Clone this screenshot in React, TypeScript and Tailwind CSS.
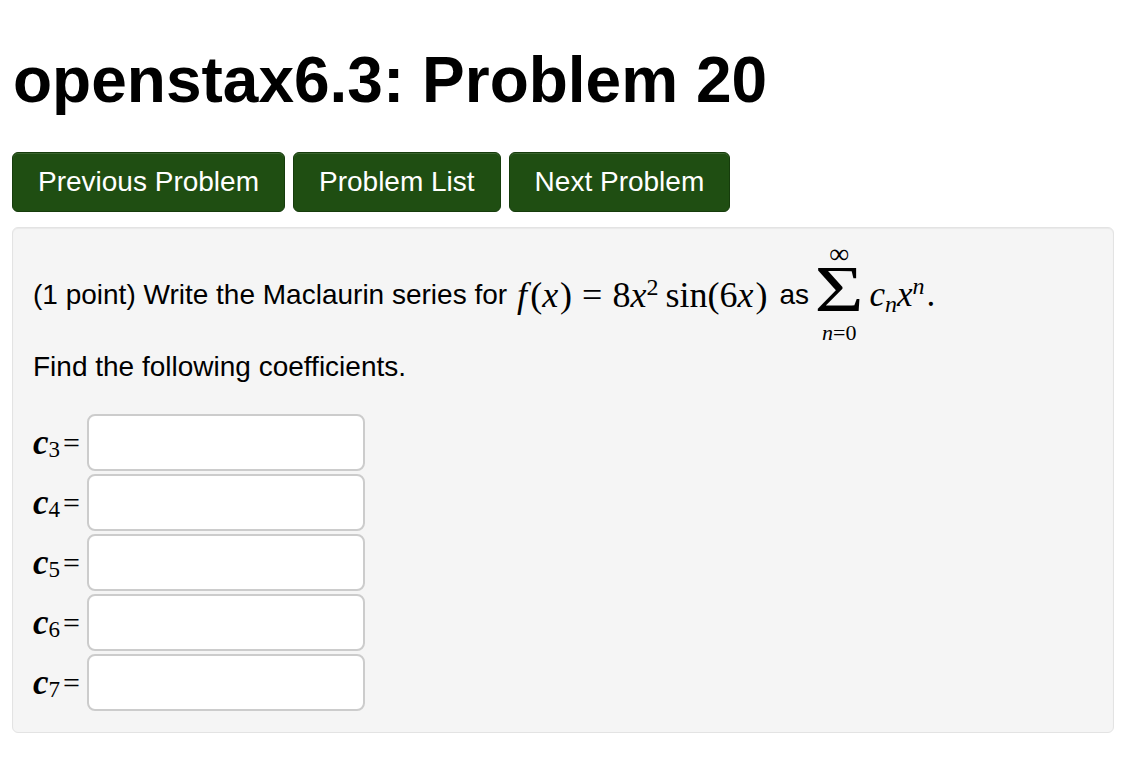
const sans = { fontFamily: '"Liberation Sans", Arial, sans-serif' }

const coefficients = [3, 4, 5, 6, 7]

function NavButton({ label }: { label: string }) {
  return (
    <button className="h-[60px] rounded-[6px] border border-[#163c0c] bg-[#1f4e12] px-[25px] text-[28px] leading-none text-white shadow-[inset_0_1px_0_rgba(255,255,255,0.12)]">
      {label}
    </button>
  )
}

function Sum() {
  return (
    <span className="mx-[11px] inline-flex flex-col items-center font-['Liberation_Serif',serif]">
      <span className="h-[14px] text-[28px] leading-[14px]">∞</span>
      <span className="mt-[5px] h-[46px] scale-x-[1.28] text-[66px] leading-[46px]">Σ</span>
      <span className="mt-[11px] h-[20px] text-[22px] leading-[20px]">
        <i>n</i>=0
      </span>
    </span>
  )
}

function CoefficientRow({ n }: { n: number }) {
  return (
    <div className="flex items-start">
      <div className="flex h-[57px] w-[54px] items-center font-['Liberation_Serif',serif] text-[35px]">
        <i className="font-semibold">c</i>
        <span className="relative top-[7px] text-[23px]">{n}</span>
        <span className="ml-[3px] text-[30px]">=</span>
      </div>
      <input
        type="text"
        className="h-[57px] w-[278px] rounded-[8px] border-2 border-[#cccccc] bg-white"
      />
    </div>
  )
}

export default function App() {
  return (
    <div className="min-h-[760px] bg-white text-black" style={sans}>
      <h1 className="ml-[13px] pt-[45px] text-[64px] font-bold leading-[1.1]">
        openstax6.3: Problem 20
      </h1>

      <div className="mt-[37px] ml-[12px] flex gap-[8px]">
        <NavButton label="Previous Problem" />
        <NavButton label="Problem List" />
        <NavButton label="Next Problem" />
      </div>

      <div className="mt-[15px] ml-[12px] w-[1102px] rounded-[6px] border border-[#e3e3e3] bg-[#f5f5f5] px-[20px] pt-[19px] pb-[21px] shadow-[inset_0_1px_1px_rgba(0,0,0,0.05)]">
        <div className="flex items-center text-[28px]">
          <span>(1 point) Write the Maclaurin series for</span>
          <span className="ml-[10px] font-['Liberation_Serif',serif] text-[36px]">
            <i>f</i>
            <span className="ml-[3px]">(</span>
            <i>x</i>
            <span className="ml-[2px]">)</span>
            <span className="mx-[10px]">=</span>8<i>x</i>
            <sup className="text-[24px]">2</sup>
            <span className="ml-[7px]">sin(6</span>
            <i>x</i>
            <span className="ml-[2px]">)</span>
          </span>
          <span className="ml-[12px]">as</span>
          <Sum />
          <span className="font-['Liberation_Serif',serif] text-[35px]">
            <i>c</i>
            <sub className="text-[24px]">
              <i>n</i>
            </sub>
            <i>x</i>
            <sup className="text-[24px]">
              <i>n</i>
            </sup>
            <span className="ml-[2px]">.</span>
          </span>
        </div>

        <p className="mt-[8px] text-[28px] leading-[32px]">Find the following coefficients.</p>

        <div className="mt-[31px] flex flex-col gap-[3px]">
          {coefficients.map((n) => (
            <CoefficientRow key={n} n={n} />
          ))}
        </div>
      </div>
    </div>
  )
}
